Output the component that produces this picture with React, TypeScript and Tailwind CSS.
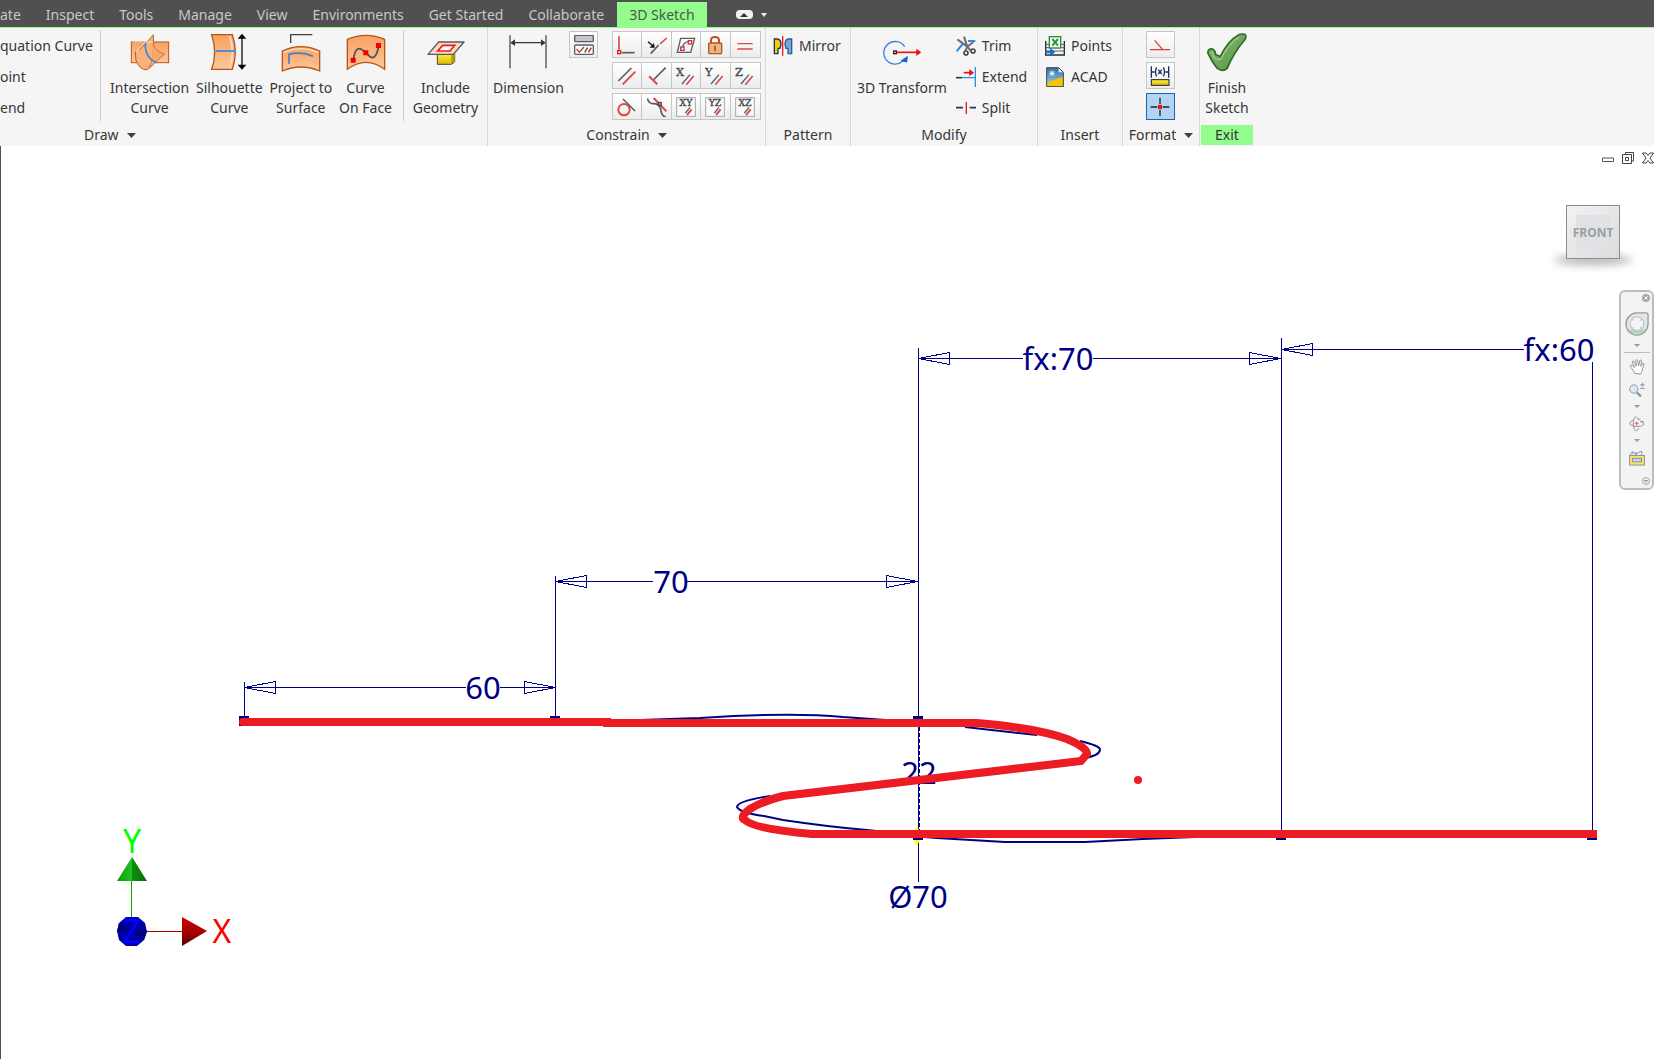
import React from "react";

type Kids = { children?: React.ReactNode };

const G = "#585d68";
const R = "#dc4a48";

function Ico({ vb, cls, children }: Kids & { vb: string; cls: string }) {
  return (
    <svg viewBox={vb} className={"block shrink-0 " + cls} fill="none" aria-hidden="true">
      {children}
    </svg>
  );
}

function Caret() {
  return (
    <svg viewBox="0 0 18 10" className="block h-[5px] w-[9px]" aria-hidden="true">
      <path d="M0 0h18L9 10z" fill="#404040" />
    </svg>
  );
}

function BigButton({ icon, lines }: { icon: React.ReactNode; lines: string[] }) {
  return (
    <button type="button" className="flex shrink-0 flex-col items-center gap-[5px] px-[3px] pt-[5px] leading-5">
      {icon}
      <span className="flex flex-col items-center whitespace-nowrap">
        {lines.map((l) => (
          <span key={l}>{l}</span>
        ))}
      </span>
    </button>
  );
}

function SmallButton({ icon, label }: { icon: React.ReactNode; label: string }) {
  return (
    <button type="button" className="flex h-[31px] items-center gap-1.5 whitespace-nowrap">
      {icon}
      <span>{label}</span>
    </button>
  );
}

function Panel({
  title,
  cls,
  labelCls = "justify-center",
  caret = false,
  children,
}: Kids & { title: string; cls: string; labelCls?: string; caret?: boolean }) {
  return (
    <section className={"flex shrink-0 flex-col border-r border-[#d9d9d9] " + cls} aria-label={title}>
      <div className="flex h-24">{children}</div>
      <div className={"flex h-[22px] items-center gap-2 " + labelCls}>
        <span>{title}</span>
        {caret && <Caret />}
      </div>
    </section>
  );
}

function Gradients() {
  return (
    <svg className="absolute h-0 w-0" aria-hidden="true">
      <defs>
        <linearGradient id="orange" x1="0" y1="0" x2="0" y2="1">
          <stop offset="0%" stopColor="#f9a15f" />
          <stop offset="100%" stopColor="#fcc79b" />
        </linearGradient>
        <linearGradient id="tick" x1="0" y1="0" x2="1" y2="1">
          <stop offset="0%" stopColor="#7fb96d" />
          <stop offset="50%" stopColor="#6fa85e" />
          <stop offset="100%" stopColor="#4f9440" />
        </linearGradient>
        <linearGradient id="gold" x1="0" y1="0" x2="0" y2="1">
          <stop offset="0%" stopColor="#fff04a" />
          <stop offset="100%" stopColor="#d9b800" />
        </linearGradient>
        <linearGradient id="sky" x1="0" y1="0" x2="0" y2="1">
          <stop offset="0%" stopColor="#2f6fa5" />
          <stop offset="100%" stopColor="#a9d3ec" />
        </linearGradient>
      </defs>
    </svg>
  );
}

const big = "h-10 w-10";
const small = "h-5 w-5";

const intersectionIcon = (
  <Ico vb="390 99 120 120" cls={big}>
    <rect x="394" y="126" width="112" height="62" fill="url(#orange)" stroke="#b5561f" strokeWidth="3" />
    <path d="M460 104v50q-2 44-20 56q-22-2-32-28l-2-26q20-12 30-24z" fill="#fbb27a" stroke="#a9602f" strokeWidth="3" strokeLinejoin="round" />
    <path d="M456 128q10 24 38 34q-20 14-44 46q10-30 6-80z" fill="#f9a968" />
    <path d="M460 136q10 20 34 26q-24 20-50 46" stroke="#c9733a" strokeWidth="3" />
    <path d="M398 126h62M408 156l50-52" stroke="#fde0c8" strokeWidth="3" />
    <path d="M436 130q-2 44 34 58" stroke="#3f86d8" strokeWidth="5" />
  </Ico>
);

const silhouetteIcon = (
  <Ico vb="624 99 120 120" cls={big}>
    <path d="M632 104h62q18 50 0 104h-62q18-50 0-104z" fill="url(#orange)" stroke="#b5561f" strokeWidth="4" />
    <path d="M686 108q16 48 0 96" stroke="#fddcc0" strokeWidth="5" />
    <path d="M644 153h60" stroke="#4a90d9" strokeWidth="6" />
    <path d="M723 112v88" stroke="#111" strokeWidth="4" />
    <path d="M723 101l13 15h-26zM723 209l13-15h-26z" fill="#000" />
  </Ico>
);

const projectIcon = (
  <Ico vb="846 96 120 120" cls={big}>
    <path d="M875 126v-25h65" stroke="#3d4048" strokeWidth="4" />
    <path d="M850 150q56-26 112 0v60q-56-24-112 0z" fill="url(#orange)" stroke="#b5561f" strokeWidth="4" />
    <path d="M854 154q52-22 104 0" stroke="#fde0c8" strokeWidth="4" />
    <path d="M870 188v-28q38-10 72 6" stroke="#3f80c8" strokeWidth="5" />
  </Ico>
);

const curveOnFaceIcon = (
  <Ico vb="1044 99 120 120" cls={big}>
    <path d="M1048 118q56-24 112 0v90q-56-42-112 0z" fill="url(#orange)" stroke="#b5561f" strokeWidth="4" />
    <path d="M1066 180q6-42 24-32q10 6 18 14q24 30 34-24" stroke="#4d4f57" strokeWidth="5" />
    <path d="M1058 173h15v15h-15zM1096 151h15v15h-15zM1134 129h15v15h-15z" fill="#f00000" />
  </Ico>
);

const includeIcon = (
  <Ico vb="82 99 120 120" cls={big}>
    <path d="M116 160h52v26l-10 7h-42z" fill="url(#gold)" stroke="#4a4a4a" strokeWidth="3" />
    <path d="M158 162v30l10-7v-24z" fill="#b89c00" />
    <path d="M120 126h76l-32 37H88z" fill="#fbdcc0" stroke="#55585f" strokeWidth="4" strokeLinejoin="round" />
    <path d="M132 136h36l-14 17h-37z" fill="#fff" stroke="#f01818" strokeWidth="5" />
  </Ico>
);

const dimensionIcon = (
  <Ico vb="327 99 120 120" cls={big}>
    <path d="M333 106v99M441 106v99" stroke="#4d525c" strokeWidth="4" />
    <path d="M336 128h102" stroke="#33363d" strokeWidth="4" />
    <path d="M334 128l14-10v20zM440 128l-14-10v20z" fill="#33363d" />
  </Ico>
);

const settingsIcon = (
  <Ico vb="519 104 60 60" cls={small}>
    <rect x="521" y="105" width="56" height="19" rx="3" fill="#c3c6cb" stroke={G} strokeWidth="4" />
    <rect x="521" y="134" width="56" height="28" rx="3" fill="#fff" stroke={G} strokeWidth="4" />
    <path d="M527 146l8 10l14-16" stroke="#c03a2a" strokeWidth="4" />
    <path d="M551 156l9-14" stroke="#444" strokeWidth="4" />
    <path d="M562 156l9-14" stroke="#c03a2a" strokeWidth="5" />
  </Ico>
);

function AxisCell({ x, y, letter }: { x: number; y: number; letter: string }) {
  return (
    <Ico vb={`${x} ${y} 60 60`} cls={small}>
      <text x={x} y={y + 29} fontSize="34" fill="#3f434c" stroke="#3f434c" fontFamily="'DejaVu Serif', serif">{letter}</text>
      <path d={`M${x + 18} ${y + 54}l24-28`} stroke={G} strokeWidth="4" />
      <path d={`M${x + 31} ${y + 56}l22-26`} stroke={R} strokeWidth="5" />
    </Ico>
  );
}

function PlaneCell({ x, y, letters }: { x: number; y: number; letters: string }) {
  return (
    <Ico vb={`${x} ${y} 60 60`} cls={small}>
      <rect x={x + 2} y={y + 2} width="56" height="56" fill="#fafafa" stroke="#a4a7ad" strokeWidth="3" />
      <text x={x + 30} y={y + 27} textAnchor="middle" fontSize="28" fill="#3f434c" stroke="#3f434c" fontFamily="'DejaVu Serif', serif">{letters}</text>
      <path d={`M${x + 28} ${y + 48}l14-17`} stroke={G} strokeWidth="4" />
      <path d={`M${x + 33} ${y + 54}l14-17`} stroke={R} strokeWidth="6" />
    </Ico>
  );
}

const constraints: { name: string; icon: React.ReactNode }[][] = [
  [
    {
      name: "Coincident",
      icon: (
        <Ico vb="51 44 60 60" cls={small}>
          <path d="M57 48v40" stroke={R} strokeWidth="5" />
          <path d="M66 97h38" stroke={G} strokeWidth="5" />
          <rect x="53" y="91" width="9" height="9" fill="#fff" stroke="#d02020" strokeWidth="4" />
        </Ico>
      ),
    },
    {
      name: "Collinear",
      icon: (
        <Ico vb="135 44 60 60" cls={small}>
          <path d="M138 64l14 12" stroke="#111" strokeWidth="4" />
          <path d="M158 82h-15l13-14z" fill="#111" />
          <path d="M146 100l24-26" stroke={G} strokeWidth="5" />
          <path d="M174 71l20-18" stroke={R} strokeWidth="5" />
        </Ico>
      ),
    },
    {
      name: "Coplanar",
      icon: (
        <Ico vb="230 44 60 60" cls={small}>
          <path d="M244 54h42l-12 42h-40z" stroke={G} strokeWidth="4" />
          <path d="M250 82q2-18 20-18" stroke={G} strokeWidth="4" />
          <rect x="244" y="80" width="10" height="10" fill="#fff" stroke="#d83030" strokeWidth="4" />
          <rect x="267" y="61" width="10" height="10" fill="#fff" stroke="#d83030" strokeWidth="4" />
        </Ico>
      ),
    },
    {
      name: "Fix",
      icon: (
        <Ico vb="316 44 60 60" cls={small}>
          <path d="M334 70V60q0-10 12-10t12 10v10" stroke="#b5561f" strokeWidth="6" />
          <rect x="327" y="68" width="39" height="32" rx="3" fill="#f4b183" stroke="#b5561f" strokeWidth="4" />
          <path d="M346 76v16" stroke="#8a3f12" strokeWidth="4" />
        </Ico>
      ),
    },
    {
      name: "Equal",
      icon: (
        <Ico vb="408 44 60 60" cls={small}>
          <path d="M415 70h46M415 86h46" stroke={R} strokeWidth="4" />
        </Ico>
      ),
    },
  ],
  [
    {
      name: "Parallel",
      icon: (
        <Ico vb="49 137 60 60" cls={small}>
          <path d="M53 182l39-39" stroke={G} strokeWidth="5" />
          <path d="M66 192l38-38" stroke={R} strokeWidth="6" />
        </Ico>
      ),
    },
    {
      name: "Perpendicular",
      icon: (
        <Ico vb="137 137 60 60" cls={small}>
          <path d="M156 179l37-37" stroke={G} strokeWidth="5" />
          <path d="M143 168l25 24" stroke={R} strokeWidth="6" />
        </Ico>
      ),
    },
    { name: "Parallel to X axis", icon: <AxisCell x={231} y={137} letter="X" /> },
    { name: "Parallel to Y axis", icon: <AxisCell x={321} y={137} letter="Y" /> },
    { name: "Parallel to Z axis", icon: <AxisCell x={411} y={137} letter="Z" /> },
  ],
  [
    {
      name: "Tangent",
      icon: (
        <Ico vb="49 230 60 60" cls={small}>
          <circle cx="70" cy="268" r="17" stroke={R} strokeWidth="6" />
          <path d="M67 236l36 36" stroke={G} strokeWidth="5" />
        </Ico>
      ),
    },
    {
      name: "Smooth",
      icon: (
        <Ico vb="138 230 60 60" cls={small}>
          <path d="M158 233l38 40" stroke={R} strokeWidth="6" />
          <path d="M139 234q4 16 18 16q18 0 22 16q2 22 16 24" stroke={G} strokeWidth="5" />
          <rect x="172" y="246" width="9" height="9" fill="#999" stroke="#444" strokeWidth="3" />
        </Ico>
      ),
    },
    { name: "Parallel to XY plane", icon: <PlaneCell x={228} y={231} letters="XY" /> },
    { name: "Parallel to YZ plane", icon: <PlaneCell x={318} y={231} letters="YZ" /> },
    { name: "Parallel to XZ plane", icon: <PlaneCell x={408} y={231} letters="XZ" /> },
  ],
];

const mirrorIcon = (
  <Ico vb="518 47 60 60" cls={small}>
    <path d="M522 56h10q10 3 10 16l-3 12h-6v16h-11z" fill="#f5cf00" stroke="#1f3550" strokeWidth="4" />
    <path d="M574 56h-10q-10 3-10 16l3 12h6v16h11z" fill="#7aa7dd" stroke="#2c5c98" strokeWidth="4" />
    <path d="M547 46v60" stroke="#f21818" strokeWidth="4" />
  </Ico>
);

const transformIcon = (
  <Ico vb="126 99 120 120" cls={big}>
    <path d="M194 140a34 34 0 1 0-6 44" stroke="#3f7fe6" strokeWidth="4" />
    <path d="M202 170l-2 16l-16-4z" fill="#1560e0" stroke="#1560e0" strokeWidth="3" />
    <path d="M168 157h64" stroke="#f01010" strokeWidth="5" />
    <path d="M244 157l-15-11v22z" fill="#f01010" />
    <rect x="161" y="153" width="8" height="8" fill="#fff" stroke="#222" strokeWidth="4" />
  </Ico>
);

const trimIcon = (
  <Ico vb="348 104 60 60" cls={small}>
    <path d="M350 150l18-22M384 119h22" stroke="#2b8ff0" strokeWidth="6" />
    <path d="M372 106l10 30l10 12M352 114l30 22l-6 12M382 136l18-14" stroke="#6a6e76" strokeWidth="6" />
    <circle cx="378" cy="155" r="6" stroke="#44474f" strokeWidth="5" />
    <circle cx="399" cy="149" r="6" stroke="#44474f" strokeWidth="5" />
  </Ico>
);

const extendIcon = (
  <Ico vb="348 198 60 60" cls={small}>
    <path d="M348 230h18" stroke="#1f3a60" strokeWidth="5" />
    <path d="M366 230h38M406 198v60" stroke="#2b8ff0" strokeWidth="4" />
    <path d="M371 215h20" stroke="#f01010" strokeWidth="5" />
    <path d="M402 215l-14-11v22z" fill="#f01010" />
  </Ico>
);

const splitIcon = (
  <Ico vb="348 291 60 60" cls={small}>
    <path d="M348 320h21M389 320h19" stroke="#1f3a60" strokeWidth="5" />
    <path d="M379 303v36" stroke="#f01818" strokeWidth="4" />
  </Ico>
);

const pointsIcon = (
  <Ico vb="615 105 60 60" cls={small}>
    <path d="M617 120v42h56v-42" stroke="#222b38" strokeWidth="4" />
    <path d="M617 130h56M617 140h56M617 150h56" stroke="#555d68" strokeWidth="3" />
    <rect x="628" y="107" width="34" height="34" fill="#f4faf4" stroke="#2f8a3c" strokeWidth="4" />
    <path d="M637 114l17 20M654 114l-17 20" stroke="#2f9440" strokeWidth="6" />
    <path d="M616 153h18" stroke="#1c6fd0" strokeWidth="7" />
    <path d="M646 153l-16-13v26z" fill="#1c6fd0" />
  </Ico>
);

const acadIcon = (
  <Ico vb="615 198 60 60" cls={small}>
    <path d="M620 200h36l14 14v43h-50z" fill="url(#sky)" />
    <path d="M620 257v-12q30-12 50-18v30z" fill="#f6c400" />
    <path d="M656 200v14h14z" fill="#e8eef4" />
    <path d="M620 200h36l14 14v43h-50z" stroke="#33475c" strokeWidth="3" />
    <path d="M628 217h16M636 209v16M630 211l12 12M642 211l-12 12" stroke="#fff" strokeWidth="3" />
  </Ico>
);

const formatIcons: { name: string; on?: boolean; icon: React.ReactNode }[] = [
  {
    name: "Construction",
    icon: (
      <Ico vb="90 44 60 60" cls={small}>
        <path d="M90 88h60M104 60l24 28" stroke="#d84040" strokeWidth="4" />
      </Ico>
    ),
  },
  {
    name: "Driven dimension",
    icon: (
      <Ico vb="88 137 60 60" cls={small}>
        <path d="M92 138v34M144 138v34M93 155h9M134 155h9" stroke="#16305c" strokeWidth="4" />
        <path d="M108 141q-7 13 0 27M128 141q7 13 0 27" stroke="#16305c" strokeWidth="4" />
        <path d="M113 148l10 13M123 148l-10 13" stroke="#16305c" strokeWidth="4" />
        <rect x="92" y="178" width="53" height="17" fill="url(#gold)" stroke="#222" strokeWidth="3" />
      </Ico>
    ),
  },
  {
    name: "Center point",
    on: true,
    icon: (
      <Ico vb="88 229 60 60" cls={small}>
        <path d="M90 259h20M126 259h20M118 231v20M118 267v20" stroke="#10243f" strokeWidth="4" />
        <rect x="112" y="253" width="12" height="12" fill="#f01010" />
      </Ico>
    ),
  },
];

const finishIcon = (
  <Ico vb="1099 99 124 124" cls={big}>
    <path
      d="M1102 162q-2-14 12-14q10 2 12 18l14 6q24-50 58-68q10-4 20 0q4 8-2 16q-34 40-54 88q-14 14-32 0q-16-20-28-46z"
      fill="url(#tick)"
      stroke="#2c6a28"
      strokeWidth="5"
      strokeLinejoin="round"
    />
    <path d="M1110 160q8-4 10 14q12 12 22 6q22-46 56-68" stroke="#b4dca6" strokeWidth="3" />
  </Ico>
);

function MenuBar() {
  const tabs = ["Inspect", "Tools", "Manage", "View", "Environments", "Get Started", "Collaborate"];
  return (
    <nav className="flex h-7 items-end gap-px overflow-hidden border-b border-[#94fc8c] bg-[#505050] text-[#c8c8c8]">
      <button type="button" className="h-[25px] pr-3">ate</button>
      {tabs.map((t) => (
        <button type="button" key={t} className="h-[25px] shrink-0 px-3">
          {t}
        </button>
      ))}
      <button type="button" className="h-[25px] shrink-0 bg-[#94fc8c] px-3 text-[#4a5a4a]">3D Sketch</button>
      <button type="button" aria-label="Ribbon display" className="ml-7 flex h-[25px] items-center gap-2">
        <span className="flex h-[9px] w-[17px] items-center justify-center rounded-sm bg-[#f2f2f2]">
          <svg viewBox="0 0 8 4" className="h-1 w-2" aria-hidden="true"><path d="M0 4h8L4 0z" fill="#333" /></svg>
        </span>
        <svg viewBox="0 0 6 4" className="h-1 w-1.5" aria-hidden="true"><path d="M0 0h6L3 4z" fill="#eee" /></svg>
      </button>
    </nav>
  );
}

function Ribbon() {
  return (
    <div className="flex h-[118px] overflow-hidden bg-[#f5f5f5] text-[#373737]">
      <Panel title="Draw" caret cls="w-[488px]" labelCls="pl-[84px]">
        <div className="mb-[3px] mt-0.5 flex w-[101px] shrink-0 flex-col items-start overflow-hidden border-r border-[#cfcfcf]">
          {["quation Curve", "oint", "end"].map((t) => (
            <button type="button" key={t} className="h-[31px] shrink-0 whitespace-nowrap">{t}</button>
          ))}
        </div>
        <div className="mr-2 flex flex-1 justify-between pl-1.5">
          <BigButton icon={intersectionIcon} lines={["Intersection", "Curve"]} />
          <BigButton icon={silhouetteIcon} lines={["Silhouette", "Curve"]} />
          <BigButton icon={projectIcon} lines={["Project to", "Surface"]} />
          <BigButton icon={curveOnFaceIcon} lines={["Curve", "On Face"]} />
        </div>
        <div className="mb-[3px] mt-0.5 w-px shrink-0 bg-[#cfcfcf]" />
        <div className="flex w-[83px] shrink-0 justify-center">
          <BigButton icon={includeIcon} lines={["Include", "Geometry"]} />
        </div>
      </Panel>
      <Panel title="Constrain" caret cls="w-[278px]">
        <div className="flex w-full justify-between pl-0.5 pr-1">
          <BigButton icon={dimensionIcon} lines={["Dimension"]} />
          <button type="button" aria-label="Constraint settings" className="ml-auto mr-3.5 mt-[3px] flex h-[27px] w-[29px] items-center justify-center border border-[#c6c6c6] bg-linear-to-b from-white to-[#ececec]">
            {settingsIcon}
          </button>
          <div className="flex w-[149px] flex-col gap-1 pt-[3px]">
            {constraints.map((row) => (
              <div key={row[0].name} className="grid h-[27px] grid-cols-5 divide-x divide-[#c6c6c6] border border-[#c6c6c6] bg-linear-to-b from-white to-[#ececec]">
                {row.map((c) => (
                  <button type="button" key={c.name} aria-label={c.name} className="flex items-center justify-center">
                    {c.icon}
                  </button>
                ))}
              </div>
            ))}
          </div>
        </div>
      </Panel>
      <Panel title="Pattern" cls="w-[85px]">
        <div className="pl-[7px] pt-0.5">
          <SmallButton icon={mirrorIcon} label="Mirror" />
        </div>
      </Panel>
      <Panel title="Modify" cls="w-[187px]">
        <div className="flex w-full gap-1.5 pl-[3px]">
          <BigButton icon={transformIcon} lines={["3D Transform"]} />
          <div className="flex flex-col pt-0.5">
            <SmallButton icon={trimIcon} label="Trim" />
            <SmallButton icon={extendIcon} label="Extend" />
            <SmallButton icon={splitIcon} label="Split" />
          </div>
        </div>
      </Panel>
      <Panel title="Insert" cls="w-[85px]">
        <div className="flex flex-col pl-[7px] pt-0.5">
          <SmallButton icon={pointsIcon} label="Points" />
          <SmallButton icon={acadIcon} label="ACAD" />
        </div>
      </Panel>
      <Panel title="Format" caret cls="w-[77px]">
        <div className="flex w-full flex-col items-center gap-1 pr-0.5 pt-[3px]">
          {formatIcons.map((f) => (
            <button
              type="button"
              key={f.name}
              aria-label={f.name}
              aria-pressed={!!f.on}
              className={
                f.on
                  ? "flex h-[27px] w-[29px] items-center justify-center border border-[#1466bd] bg-[#b4d3f1]"
                  : "flex h-[27px] w-[29px] items-center justify-center border border-[#c6c6c6] bg-linear-to-b from-white to-[#ececec]"
              }
            >
              {f.icon}
            </button>
          ))}
        </div>
      </Panel>
      <section className="flex w-[54px] shrink-0 flex-col px-px" aria-label="Exit">
        <div className="flex h-24 justify-center">
          <BigButton icon={finishIcon} lines={["Finish", "Sketch"]} />
        </div>
        <div className="mt-px flex h-5 items-center justify-center bg-[#94fc8c]">Exit</div>
      </section>
    </div>
  );
}

function Arrow({ x, y, dir }: { x: number; y: number; dir: 1 | -1 }) {
  return <path d={`M${x} ${y}L${x + 31 * dir} ${y - 6}V${y + 6}Z`} />;
}

function Drawing() {
  return (
    <svg viewBox="0 146 1661 913" className="block h-auto w-full" role="img" aria-label="3D sketch">
      <defs>
        <linearGradient id="coneY" x1="0" x2="1" y1="0" y2="0">
          <stop offset="0%" stopColor="#0a9a0a" />
          <stop offset="48%" stopColor="#22c022" />
          <stop offset="52%" stopColor="#0c8c0c" />
          <stop offset="100%" stopColor="#067006" />
        </linearGradient>
        <linearGradient id="coneX" x1="0" x2="0" y1="0" y2="1">
          <stop offset="0%" stopColor="#d00000" />
          <stop offset="50%" stopColor="#a80000" />
          <stop offset="100%" stopColor="#5a0000" />
        </linearGradient>
      </defs>
      <g fill="none" stroke="#000084" strokeWidth="1" shapeRendering="crispEdges">
        <path d="M244.5 682V717M555.5 576V717M918.5 348V882M1281.5 338V830M1592.5 362V830" />
        <path d="M244 687.5H466M500 687.5H555M555 581.5H653M687 581.5H918M918 358.5H1023M1093 358.5H1281M1281 349.5H1524" />
        <path d="M919.5 727V830" strokeDasharray="4 2" />
        <Arrow x={244.5} y={687.5} dir={1} />
        <Arrow x={555.5} y={687.5} dir={-1} />
        <Arrow x={555.5} y={581.5} dir={1} />
        <Arrow x={917.5} y={581.5} dir={-1} />
        <Arrow x={918.5} y={358.5} dir={1} />
        <Arrow x={1280.5} y={358.5} dir={-1} />
        <Arrow x={1281.5} y={349.5} dir={1} />
      </g>
      <path d="M917 826l3 6l6 4l-6 4l-3 6l-3-6l-6-4l6-4z" fill="#ffff00" />
      <path d="M239 716h10v10h-10zM550 716h10v10h-10zM913 716h10v10h-10zM913 830h10v10h-10zM1276 830h10v10h-10zM1587 830h10v10h-10z" fill="#000084" />
      <g fill="none" stroke="#000084" strokeWidth="2">
        <path d="M640 720L700 718Q790 712 843 717L900 721" />
        <path d="M965 727L1037 735M1080 741Q1101 746 1100 750Q1099 756 1084 758" />
        <path d="M770 796Q737 801 737 807Q740 813 764 816L783 820Q830 827 867 830L896 833" />
        <path d="M910 836L937 838L1005 842H1085L1143 839L1195 837" />
      </g>
      <g fill="#000084" fontSize="31" fontFamily="'Noto Sans', sans-serif" textAnchor="middle">
        <text x="483" y="699">60</text>
        <text x="671" y="593">70</text>
        <text x="1058" y="370">fx:70</text>
        <text x="1559" y="361">fx:60</text>
        <text x="919" y="784">22</text>
        <text x="918" y="908">Ø70</text>
      </g>
      <path
        d="M243 722H607V723H977Q1036 728 1067 739Q1088 748 1087 754L1081 761L783 796Q763 801 750 809Q739 817 745 820Q754 829 812 834H1597"
        fill="none"
        stroke="#ed1c24"
        strokeWidth="8"
      />
      <circle cx="243" cy="722" r="4" fill="#ed1c24" />
      <circle cx="1138" cy="780" r="4" fill="#ed1c24" />
      <g shapeRendering="crispEdges">
        <path d="M131.5 881V918" stroke="#00a800" />
        <path d="M146 931.5H182" stroke="#a80000" />
      </g>
      <path d="M132 857L147 881H117Z" fill="url(#coneY)" />
      <path d="M182 917L207 931L182 946Z" fill="url(#coneX)" />
      <path d="M126 917h12l7 6l2 9l-3 8l-7 6h-11l-7-6l-2-9l2-8z" fill="#0000a4" />
      <path d="M132 932l15-2l-3 10zM132 932l-13-9l-2 9z" fill="#000080" />
      <g fontSize="32" fontFamily="'Noto Sans', sans-serif" textAnchor="middle">
        <text x="132" y="853" fill="#00ff00">Y</text>
        <text x="222" y="943" fill="#ff0000">X</text>
        <text x="132" y="943" fill="#0000ff">Z</text>
      </g>
    </svg>
  );
}

function NavCaret() {
  return (
    <svg viewBox="0 0 6 3" className="h-[3px] w-1.5 shrink-0" aria-hidden="true">
      <path d="M0 0h6L3 3z" fill="#9a9a9a" />
    </svg>
  );
}

function NavBar() {
  return (
    <div role="toolbar" aria-label="Navigation" className="absolute right-[7px] top-36 flex h-[200px] w-[35px] flex-col items-center rounded-md border-2 border-[#bdbdbd] bg-[#f3f3f3]">
      <button type="button" aria-label="Close" className="mr-0.5 mt-0.5 self-end">
        <Ico vb="0 0 16 16" cls="h-2 w-2">
          <circle cx="8" cy="8" r="8" fill="#a9a9a9" />
          <path d="M5 5l6 6M11 5l-6 6" stroke="#fff" strokeWidth="2" />
        </Ico>
      </button>
      <button type="button" aria-label="Steering wheel" className="mt-2.5">
        <Ico vb="252 546 74 74" cls="h-6 w-6">
          <path d="M289 549h28q6 0 6 6v28a34 34 0 1 1-34-34z" fill="#e3e6e8" stroke="#999" strokeWidth="4" />
          <path d="M263 600a32 32 0 0 0 52 0z" fill="#a9dcb2" />
          <circle cx="289" cy="582" r="21" fill="#f4f5f6" stroke="#c4c8cc" strokeWidth="4" />
          <path d="M280 573l-6-6M298 573l6-6M280 591l-6 6M298 591l6 6" stroke="#b5b9bd" strokeWidth="3" />
        </Ico>
      </button>
      <div className="mt-2"><NavCaret /></div>
      <div className="mt-[5px] h-px w-[26px] shrink-0 bg-[#bdbdbd]" />
      <button type="button" aria-label="Pan" className="mt-1.5">
        <Ico vb="266 685 50 50" cls="h-4 w-4">
          <path
            d="M284 730q-4-10-14-22q0-6 7-3l7 7l-8-18q2-6 6-1l7 14l-2-18q4-5 6 1l3 16l4-17q4-3 5 2l-2 17l6-9q5-1 4 4l-5 12q0 10-6 17z"
            fill="#fff"
            stroke="#8c8f94"
            strokeWidth="3"
          />
        </Ico>
      </button>
      <button type="button" aria-label="Zoom" className="mt-[7px]">
        <Ico vb="266 758 50 50" cls="h-4 w-4">
          <circle cx="281" cy="780" r="13" fill="#dbe8f7" stroke="#8f98a3" strokeWidth="3" />
          <path d="M290 790l13 13" stroke="#8f9399" strokeWidth="7" />
          <path d="M301 767h14M308 760v13M301 778h14" stroke="#8c8f94" strokeWidth="3" />
        </Ico>
      </button>
      <div className="mt-[7px]"><NavCaret /></div>
      <button type="button" aria-label="Orbit" className="mt-2">
        <Ico vb="266 860 50 50" cls="h-4 w-4">
          <path d="M282 867q8-10 14 6M283 902q6 10 14-4M282 867q-7 18 1 35M278 873q-12 6-9 13q8 8 34 6M300 876q14 4 13 10l-8 6" stroke="#8c8f94" strokeWidth="3" />
          <path d="M290 877v12M284 883h12" stroke="#ee5555" strokeWidth="3" />
          <path d="M294 870h8M304 878h8" stroke="#8c8f94" strokeWidth="3" />
        </Ico>
      </button>
      <div className="mt-[7px]"><NavCaret /></div>
      <button type="button" aria-label="Look at" className="mt-2">
        <Ico vb="266 963 50 50" cls="h-4 w-4">
          <path d="M269 978l8-10v5l12-2l-3 7l14-10h6v10" fill="#eef" stroke="#8091a6" strokeWidth="3" />
          <rect x="268" y="980" width="46" height="30" fill="#ffe065" stroke="#8091a6" strokeWidth="3" />
          <rect x="277" y="989" width="28" height="11" fill="#c7d3df" stroke="#8091a6" strokeWidth="3" />
        </Ico>
      </button>
      <button type="button" aria-label="Options" className="mb-[3px] mr-0.5 mt-auto self-end">
        <Ico vb="0 0 16 16" cls="h-2 w-2">
          <circle cx="8" cy="8" r="7" stroke="#a9a9a9" strokeWidth="2" fill="#eee" />
          <path d="M4 7h8M6 10h4" stroke="#999" strokeWidth="2" />
        </Ico>
      </button>
    </div>
  );
}

function Viewport() {
  return (
    <main className="relative flex-1 overflow-hidden border-l border-[#505050] bg-white">
      <div className="-ml-px">
        <Drawing />
      </div>
      <div className="absolute right-[7px] top-1.5 flex items-center gap-2">
        <button type="button" aria-label="Minimize">
          <Ico vb="0 0 24 24" cls="h-3 w-3"><path d="M1 12h22v7H1z" stroke="#555" strokeWidth="2" /></Ico>
        </button>
        <button type="button" aria-label="Restore">
          <Ico vb="0 0 24 24" cls="h-3 w-3"><path d="M7 5V1h16v17h-4M1 5h18v18H1zM7 11h6v6H7z" stroke="#444" strokeWidth="2" /></Ico>
        </button>
        <button type="button" aria-label="Close">
          <Ico vb="0 0 24 24" cls="h-3 w-3">
            <path d="M1 2h7l4 5l4-5h7l-7 10l7 10h-7l-4-5l-4 5H1l7-10z" fill="#fff" stroke="#444" strokeWidth="2" />
          </Ico>
        </button>
      </div>
      <div className="absolute right-[41px] top-[59px]">
        <div className="absolute -inset-x-3 -bottom-1.5 h-2.5 rounded-[50%] bg-black/30 blur-xs" />
        <button type="button" className="relative flex h-[54px] w-[54px] items-center justify-center border border-[#8c8c8c] bg-linear-to-br from-[#f2f2f2] to-[#dcdcdc] font-['Open_Sans',sans-serif] text-xs font-bold text-[#9b9ea3]">
          <span className="flex h-[34px] w-[34px] items-center justify-center bg-[#dfe1e4] pt-px">FRONT</span>
        </button>
      </div>
      <NavBar />
    </main>
  );
}

export default function App() {
  return (
    <div className="flex min-h-screen flex-col bg-white font-['Noto_Sans',sans-serif] text-[14px] leading-5">
      <Gradients />
      <header className="mr-[7px]">
        <MenuBar />
        <Ribbon />
      </header>
      <Viewport />
    </div>
  );
}
